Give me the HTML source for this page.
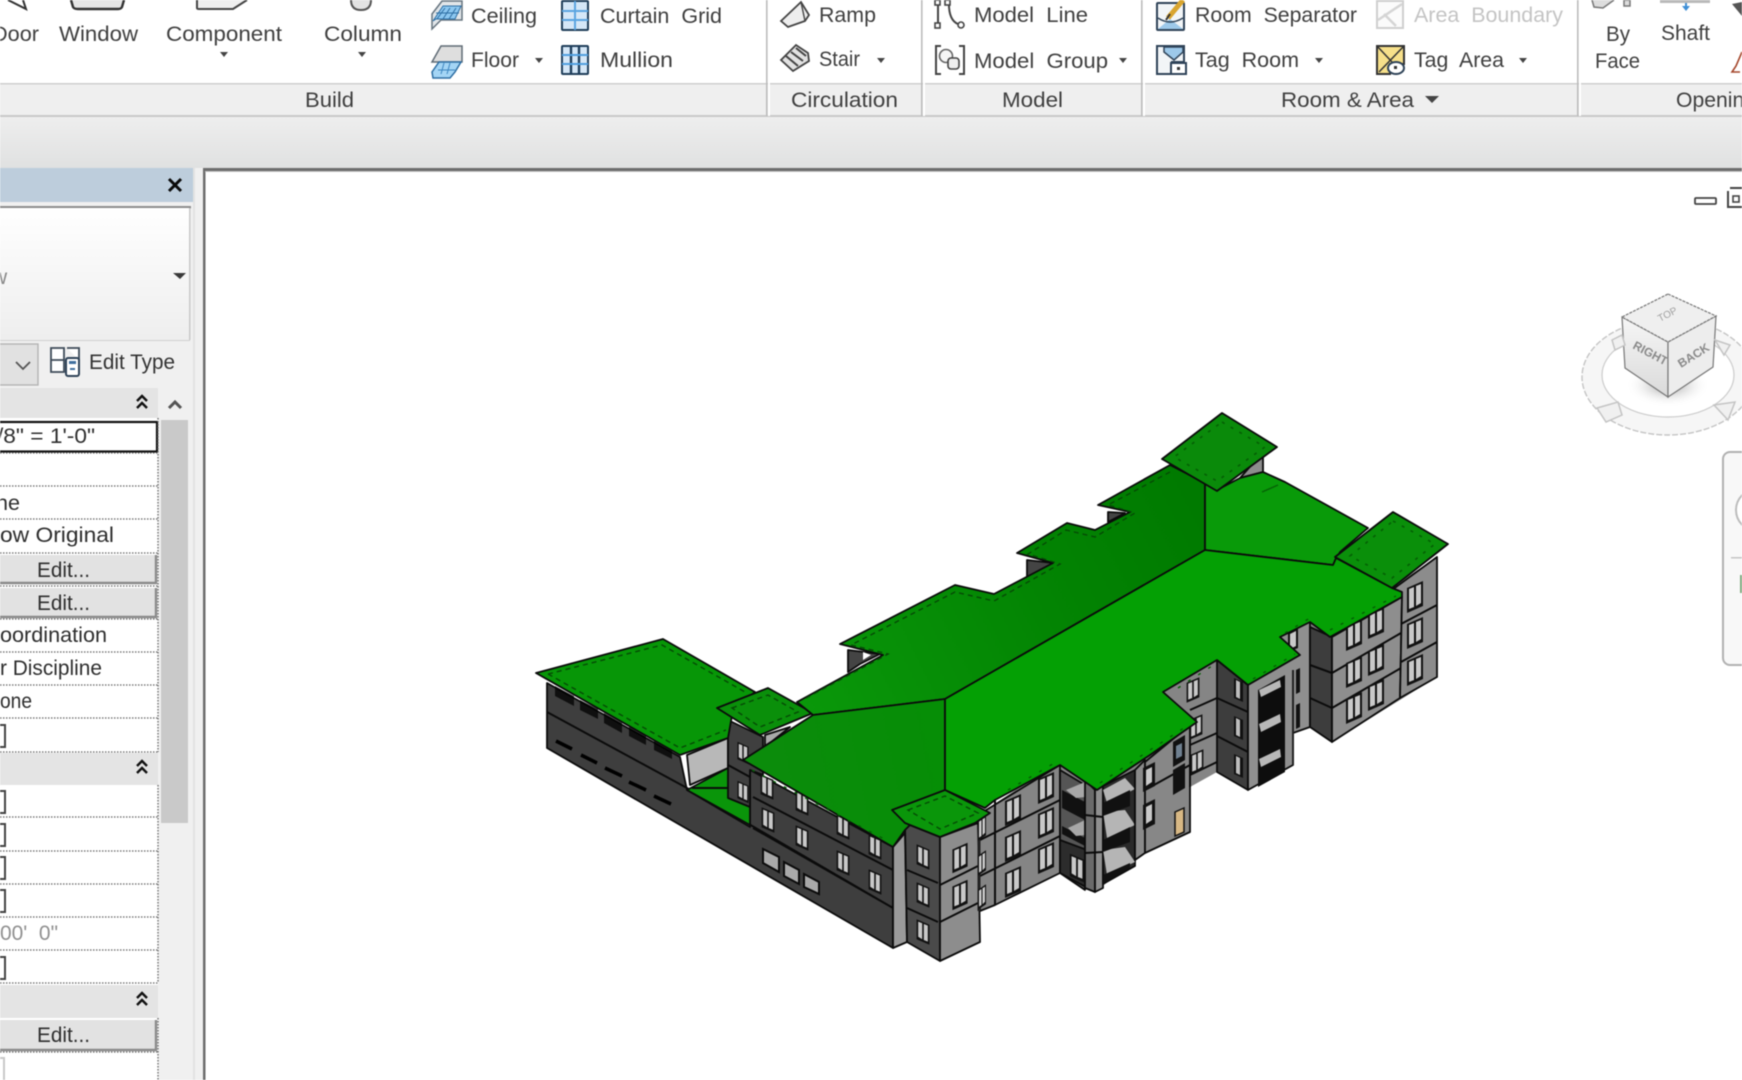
<!DOCTYPE html>
<html><head><meta charset="utf-8"><title>Revit</title>
<style>
html,body{margin:0;padding:0;background:#fff;width:1742px;height:1080px;overflow:hidden}
svg{display:block;position:absolute;left:0;top:0;filter:blur(.45px)}
text{font-family:"Liberation Sans",sans-serif;fill:#3f3f3f}
.r{font-size:21px}
.p{font-size:21px;fill:#2e2e2e}
.i{stroke:#2f4358;stroke-width:2;fill:none}
.dash{fill:none;stroke:#064a06;stroke-width:1.4;stroke-dasharray:5 4}
.l{stroke:#0b0b0b;stroke-width:2;fill:none}
.f{stroke:#0b0b0b;stroke-width:1.8;stroke-linejoin:round}
</style></head><body>
<svg width="1742" height="1080" viewBox="0 0 1742 1080" xmlns="http://www.w3.org/2000/svg">
<defs>
<linearGradient id="band" x1="0" y1="0" x2="0" y2="1"><stop offset="0" stop-color="#eeeeee"/><stop offset="1" stop-color="#e0e1e1"/></linearGradient>
<linearGradient id="sel" x1="0" y1="0" x2="0" y2="1"><stop offset="0" stop-color="#ffffff"/><stop offset="1" stop-color="#eeeeee"/></linearGradient>
<linearGradient id="back" x1="800" y1="700" x2="1200" y2="500" gradientUnits="userSpaceOnUse"><stop offset="0" stop-color="#0a980a"/><stop offset=".6" stop-color="#038403"/><stop offset="1" stop-color="#007a00"/></linearGradient>
<linearGradient id="hipL" x1="745" y1="760" x2="945" y2="720" gradientUnits="userSpaceOnUse"><stop offset="0" stop-color="#0c8c0c"/><stop offset="1" stop-color="#068e06"/></linearGradient>
<linearGradient id="cube" x1="0" y1="0" x2="0" y2="1"><stop offset="0" stop-color="#f6f6f6"/><stop offset="1" stop-color="#dadada"/></linearGradient>
<radialGradient id="shad" cx=".5" cy=".5" r=".5"><stop offset="0" stop-color="#9a9a9a"/><stop offset="1" stop-color="#ffffff" stop-opacity="0"/></radialGradient>
<g id="wR"><polygon points="-8,-9 8,-16 8,9 -8,16" fill="#111"/><polygon points="-6,-8 -1,-10 -1,10 -6,12" fill="#c9c9c9"/><polygon points="1,-11 6,-13 6,6 1,9" fill="#c9c9c9"/></g>
<g id="wL"><polygon points="8,-9 -8,-16 -8,9 8,16" fill="#111"/><polygon points="6,-8 1,-10 1,10 6,12" fill="#c9c9c9"/><polygon points="-1,-11 -6,-13 -6,6 -1,9" fill="#c9c9c9"/></g>
<g id="chev"><path d="M-5,-2 0,-7 5,-2M-5,5 0,0 5,5" fill="none" stroke="#111" stroke-width="2.4"/></g>
<g id="tri"><polygon points="-4,-2 4,-2 0,3" fill="#444"/></g>
<g id="cb"><path d="M-9,-11H4V11H-9" fill="#fff" stroke="#444" stroke-width="2"/></g>
</defs>

<!-- window chrome -->
<rect width="1742" height="1080" fill="#f1f1f1"/>
<rect y="0" width="1742" height="83" fill="#fff"/>
<rect y="83" width="1742" height="33" fill="#efefef"/>
<rect y="83" width="1742" height="1.5" fill="#cfcfcf"/>
<rect y="115" width="1742" height="2" fill="#c9c9c9"/>
<rect y="117" width="1742" height="51" fill="url(#band)"/>
<g fill="#bcbcbc"><rect x="766" y="0" width="1.6" height="116"/><rect x="921" y="0" width="1.6" height="116"/><rect x="1141" y="0" width="1.6" height="116"/><rect x="1577" y="0" width="1.6" height="116"/></g>
<g fill="#fff"><rect x="768" y="83" width="2" height="33"/><rect x="923" y="83" width="2" height="33"/><rect x="1143" y="83" width="2" height="33"/><rect x="1579" y="83" width="2" height="33"/></g>

<!-- ribbon big icon stubs -->
<path d="M8,0 26,9 23,0" fill="#fff" stroke="#333" stroke-width="2"/>
<path d="M71,0 73,7 Q74,9 78,9H118Q121,9 122,7L124,0" fill="#e6e6e6" stroke="#333" stroke-width="2.4"/>
<path d="M197,0V8Q197,9 199,9H233L247,0" fill="#efefef" stroke="#444" stroke-width="2"/>
<path d="M351,0Q351,10 361,10 371,10 371,0" fill="#e3e3e3" stroke="#555" stroke-width="2"/>

<!-- ribbon small icons -->
<g>
<path d="M432,29V14L442,1H462V20H441Z" fill="#e2e6e9" stroke="#66747f" stroke-width="1.5"/>
<path d="M433,21 443,6H461L455,19H436Z" fill="#8cc7f0" stroke="#2d6ea3" stroke-width="1"/>
<path d="M437,19 445,8M443,19 450,8M449,19 456,8M436,13H459" stroke="#2d6ea3" stroke-width="1" fill="none"/>
<path d="M432,62 441,46H462V62H440Z" fill="#dedede" stroke="#5f6b75" stroke-width="1.5"/>
<path d="M432,72 439,62H461L455,72 450,78H433Z" fill="#a4d5f5" stroke="#2d6ea3" stroke-width="1.5"/>
<path d="M438,70H455M444,63 441,74M450,63 447,74" stroke="#3d86c0" stroke-width="1" fill="none"/>
<rect x="562" y="1" width="26" height="29" rx="1" fill="#d5e7f7" stroke="#1f3e5a" stroke-width="2"/>
<path d="M575,1V30M562,11H588M562,20H588" stroke="#5ba5e0" stroke-width="2"/>
<rect x="562" y="46" width="26" height="28" rx="1" fill="#d5e7f7" stroke="#1f3e5a" stroke-width="2"/>
<path d="M571,46V74M579,46V74" stroke="#1f3e5a" stroke-width="2.4"/>
<path d="M562,55H571M562,64H571M579,55H588M579,64H588M571,55H579M571,64H579" stroke="#4f9fdf" stroke-width="2"/>
<path d="M781,21 801,2 809,15 805,21 788,27Z" fill="#eee" stroke="#444" stroke-width="1.8"/>
<path d="M801,2 805,21" stroke="#444" stroke-width="1.4"/>
<path d="M781,60 796,45 808,53 809,61 793,71Z" fill="#e2e2e2" stroke="#444" stroke-width="1.8"/>
<path d="M786,56 798,66M791,52 803,61M796,48 806,56" stroke="#444" stroke-width="2" fill="none"/>
<path d="M938,0V26M949,0Q948,20 958,24" fill="none" style="stroke:#444;stroke-width:2"/>
<rect x="935" y="0" width="5" height="5" fill="#fff" stroke="#444" stroke-width="1.6"/><rect x="945" y="0" width="5" height="5" fill="#fff" stroke="#444" stroke-width="1.6"/><rect x="935" y="23" width="5" height="5" fill="#fff" stroke="#444" stroke-width="1.6"/><circle cx="961" cy="25" r="3" fill="#fff" stroke="#444" stroke-width="1.6"/>
<path d="M941,46H936V74H941M959,46H964V74H959" fill="none" stroke="#444" stroke-width="2"/>
<circle cx="946" cy="56" r="6.5" fill="#f6f6f6" stroke="#666" stroke-width="1.6"/><rect x="948" y="58" width="11" height="11" rx="3" fill="#eee" stroke="#444" stroke-width="1.6"/>
<rect x="1157" y="3" width="27" height="27" rx="1" fill="#f2f5f7" stroke="#2f4358" stroke-width="2"/>
<path d="M1158,29 1170,19 1183,29Z" fill="#9dc9ea"/><path d="M1158,18Q1170,26 1183,18" stroke="#2f4358" stroke-width="1.5" fill="none"/>
<path d="M1168,18 1183,0" stroke="#d9a52f" stroke-width="5"/><path d="M1166,20 1170,14" stroke="#333" stroke-width="2"/>
<path d="M1157,74V46H1184V62H1172V74Z" fill="#f2f5f7" stroke="#2f4358" stroke-width="2"/>
<path d="M1164,47H1183V52L1174,60 1164,52Z" fill="#9dc9ea" stroke="#2f4358" stroke-width="1.5"/>
<rect x="1171" y="63" width="15" height="11" fill="#fff" stroke="#2f4358" stroke-width="2"/><rect x="1177" y="67" width="3" height="3" fill="#333"/>
<rect x="1377" y="1" width="26" height="27" fill="#fbfbfb" stroke="#cfcfcf" stroke-width="2"/><path d="M1378,20 1402,4M1384,14 1396,26" stroke="#d5d5d5" stroke-width="2.5"/>
<path d="M1377,46H1404V64H1390V74H1377Z" fill="#f7e08a" stroke="#333" stroke-width="2"/><path d="M1377,46 1392,62M1404,46 1379,72" stroke="#333" stroke-width="1.5" fill="none"/>
<ellipse cx="1396" cy="68" rx="8" ry="6" fill="#fff" stroke="#2f4358" stroke-width="2"/><rect x="1394" y="66" width="3" height="3" fill="#333"/>
<path d="M1592,0 1594,7 1603,8 1614,0M1624,0H1630V6H1624Z" fill="#ddd" stroke="#777" stroke-width="1.5"/>
<rect x="1660" y="0" width="50" height="3" fill="#b9b9b9"/><path d="M1686,3V10" stroke="#3f8fd6" stroke-width="2"/><path d="M1682,6 1686,11 1690,6Z" fill="#3f8fd6"/>
<path d="M1732,4 1742,16V2Z" fill="#555"/><path d="M1742,52 1736,66 1732,72H1740" fill="none" stroke="#a5472c" stroke-width="1.6"/>
</g>

<!-- ribbon text -->
<g class="r">
<text x="-8" y="41" textLength="47" lengthAdjust="spacingAndGlyphs">Door</text>
<text x="59" y="41" textLength="79" lengthAdjust="spacingAndGlyphs">Window</text>
<text x="166" y="41" textLength="116" lengthAdjust="spacingAndGlyphs">Component</text>
<text x="324" y="41" textLength="78" lengthAdjust="spacingAndGlyphs">Column</text>
<text x="471" y="23" textLength="66" lengthAdjust="spacingAndGlyphs">Ceiling</text>
<text x="471" y="67" textLength="48" lengthAdjust="spacingAndGlyphs">Floor</text>
<text x="600" y="23" textLength="122" lengthAdjust="spacingAndGlyphs" xml:space="preserve">Curtain  Grid</text>
<text x="600" y="67" textLength="73" lengthAdjust="spacingAndGlyphs">Mullion</text>
<text x="819" y="22" textLength="57" lengthAdjust="spacingAndGlyphs">Ramp</text>
<text x="819" y="66" textLength="41" lengthAdjust="spacingAndGlyphs">Stair</text>
<text x="974" y="22" textLength="114" lengthAdjust="spacingAndGlyphs" xml:space="preserve">Model  Line</text>
<text x="974" y="68" textLength="134" lengthAdjust="spacingAndGlyphs" xml:space="preserve">Model  Group</text>
<text x="1195" y="22" textLength="162" lengthAdjust="spacingAndGlyphs" xml:space="preserve">Room  Separator</text>
<text x="1414" y="22" textLength="149" lengthAdjust="spacingAndGlyphs" style="fill:#c4c4c4" xml:space="preserve">Area  Boundary</text>
<text x="1195" y="67" textLength="104" lengthAdjust="spacingAndGlyphs" xml:space="preserve">Tag  Room</text>
<text x="1414" y="67" textLength="90" lengthAdjust="spacingAndGlyphs" xml:space="preserve">Tag  Area</text>
<text x="1606" y="41" textLength="24" lengthAdjust="spacingAndGlyphs">By</text>
<text x="1595" y="68" textLength="45" lengthAdjust="spacingAndGlyphs">Face</text>
<text x="1661" y="40" textLength="49" lengthAdjust="spacingAndGlyphs">Shaft</text>
<text x="305" y="107" textLength="49" lengthAdjust="spacingAndGlyphs">Build</text>
<text x="791" y="107" textLength="107" lengthAdjust="spacingAndGlyphs">Circulation</text>
<text x="1002" y="107" textLength="61" lengthAdjust="spacingAndGlyphs">Model</text>
<text x="1281" y="107" textLength="133" lengthAdjust="spacingAndGlyphs">Room &amp; Area</text>
<text x="1676" y="107" textLength="80" lengthAdjust="spacingAndGlyphs">Opening</text>
</g>
<use href="#tri" x="224" y="54"/><use href="#tri" x="362" y="54"/><use href="#tri" x="539" y="60"/><use href="#tri" x="881" y="60"/><use href="#tri" x="1123" y="60"/><use href="#tri" x="1319" y="60"/><use href="#tri" x="1523" y="60"/>
<polygon points="1425,96 1439,96 1432,103" fill="#444"/>

<!-- properties panel -->
<rect x="0" y="168" width="203" height="912" fill="#f0f0f0"/>
<rect x="0" y="168" width="193" height="34" fill="#bdcddc"/>
<rect x="193" y="168" width="2" height="912" fill="#e2e2e2"/>
<path d="M169,179 181,191M181,179 169,191" stroke="#0a0a0a" stroke-width="3"/>
<rect x="0" y="206" width="191" height="2.5" fill="#8d8d8d"/>
<rect x="0" y="208" width="190" height="132" fill="url(#sel)"/>
<rect x="189" y="208" width="1.5" height="132" fill="#c9c9c9"/><rect x="0" y="340" width="190" height="1" fill="#d0d0d0"/>
<text x="-8" y="284" class="p" style="fill:#888">w</text>
<polygon points="173,273 186,273 180,279" fill="#3a3a3a"/>
<rect x="-2" y="344" width="40" height="41" fill="#e1e1e1" stroke="#b4b4b4" stroke-width="1.4"/>
<path d="M16,362 23,369 30,362" stroke="#555" stroke-width="1.8" fill="none"/>
<path d="M51,372V348H64V372ZM67,348H79V360M51,360H64" fill="#fff" stroke="#3d4a58" stroke-width="1.8"/>
<rect x="66" y="358" width="13" height="18" rx="2" fill="#fff" stroke="#2f4358" stroke-width="2"/><rect x="69" y="361" width="7" height="3" fill="#3f6f9f"/><path d="M70,369H75" stroke="#3f6f9f" stroke-width="2"/>
<text x="89" y="369" class="p" textLength="86" lengthAdjust="spacingAndGlyphs" style="fill:#333">Edit Type</text>

<rect x="0" y="388" width="158" height="30" fill="#e4e4e4"/>
<rect x="0" y="418" width="158" height="662" fill="#fff"/>
<rect x="0" y="753" width="158" height="32" fill="#e4e4e4"/>
<rect x="0" y="985" width="158" height="33" fill="#e4e4e4"/>
<use href="#chev" x="142" y="403"/><use href="#chev" x="142" y="768"/><use href="#chev" x="142" y="1000"/>
<rect x="161" y="388" width="27" height="692" fill="#f0f0f0"/>
<rect x="161" y="420" width="27" height="403" fill="#c9c9c9"/>
<path d="M169,408 175,402 181,408" stroke="#555" stroke-width="3" fill="none"/>
<rect x="-3" y="422" width="160" height="29.5" fill="#fff" stroke="#111" stroke-width="2.2"/>
<text x="-3" y="443" class="p" textLength="98" lengthAdjust="spacingAndGlyphs">/8" = 1'-0"</text>
<g stroke="#666" stroke-width="1.3" stroke-dasharray="1.5 1.5">
<path d="M0,453H158M0,486H158M0,519H158M0,553H158M0,586H158M0,619H158M0,652H158M0,685H158M0,718H158M0,752H158M0,817H158M0,851H158M0,884H158M0,917H158M0,950H158M0,983H158M0,1052H158"/>
<path d="M158,418V752M158,785V983M158,1018V1080"/>
</g>
<text x="-4" y="510" class="p" textLength="24" lengthAdjust="spacingAndGlyphs">ne</text>
<text x="0" y="542" class="p" textLength="114" lengthAdjust="spacingAndGlyphs">ow Original</text>
<g>
<rect x="-2" y="555" width="158" height="28" fill="#e2e2e2"/><path d="M156,555V583H-2" stroke="#8a8a8a" stroke-width="2.4" fill="none"/>
<rect x="-2" y="588" width="158" height="29" fill="#e2e2e2"/><path d="M156,588V617H-2" stroke="#8a8a8a" stroke-width="2.4" fill="none"/>
<rect x="-2" y="1020" width="158" height="30" fill="#e2e2e2"/><path d="M156,1020V1050H-2" stroke="#8a8a8a" stroke-width="2.4" fill="none"/>
</g>
<text x="37" y="577" class="p" textLength="53" lengthAdjust="spacingAndGlyphs">Edit...</text>
<text x="37" y="610" class="p" textLength="53" lengthAdjust="spacingAndGlyphs">Edit...</text>
<text x="37" y="1042" class="p" textLength="53" lengthAdjust="spacingAndGlyphs">Edit...</text>
<text x="0" y="642" class="p" textLength="107" lengthAdjust="spacingAndGlyphs">oordination</text>
<text x="0" y="675" class="p" textLength="102" lengthAdjust="spacingAndGlyphs">r Discipline</text>
<text x="0" y="708" class="p" textLength="32" lengthAdjust="spacingAndGlyphs">one</text>
<text x="0" y="940" class="p" textLength="58" lengthAdjust="spacingAndGlyphs" style="fill:#909090" xml:space="preserve">00'  0"</text>
<use href="#cb" x="1" y="736"/><use href="#cb" x="1" y="802"/><use href="#cb" x="1" y="835"/><use href="#cb" x="1" y="868"/><use href="#cb" x="1" y="901"/><use href="#cb" x="1" y="968"/>
<path d="M-5,1058H4V1080" fill="none" stroke="#c9c9c9" stroke-width="2"/>

<!-- viewport -->
<rect x="203" y="169" width="1539" height="911" fill="#fff"/>
<rect x="203" y="168" width="1539" height="3" fill="#6d6d6d"/>
<rect x="203" y="168" width="2.5" height="912" fill="#6d6d6d"/>
<rect x="205" y="171" width="1537" height="1" fill="#c5c5c5"/>

<!-- view controls -->
<rect x="1695" y="198" width="21" height="6" rx="1" fill="#fff" stroke="#444" stroke-width="1.8"/>
<path d="M1730,188H1742M1728,191V207H1742" fill="none" stroke="#444" stroke-width="2"/><rect x="1733" y="196" width="6" height="6" fill="none" stroke="#444" stroke-width="1.6"/>
<!-- view cube -->
<g>
<ellipse cx="1668" cy="377" rx="86" ry="58" fill="#f6f6f6" stroke="#c4c4c4" stroke-width="1.4" stroke-dasharray="6 2"/>
<ellipse cx="1668" cy="375" rx="66" ry="42" fill="#fff" stroke="#cccccc" stroke-width="1.2"/>
<ellipse cx="1668" cy="385" rx="42" ry="22" fill="url(#shad)"/>
<polygon points="1622,317 1668,342 1668,397 1625,368" fill="url(#cube)" stroke="#777" stroke-width="1.2"/>
<polygon points="1668,342 1716,316 1713,367 1668,397" fill="#ededed" stroke="#777" stroke-width="1.2"/>
<polygon points="1668,294 1716,316 1668,342 1622,317" fill="#efefef" stroke="#777" stroke-width="1.2" stroke-dasharray="3 1"/>
<text transform="translate(1632,348) rotate(28)" style="font-size:12px;fill:#8a8a8a;font-weight:bold">RIGHT</text>
<text transform="translate(1681,368) rotate(-32)" style="font-size:12px;fill:#8a8a8a;font-weight:bold">BACK</text>
<text transform="translate(1660,322) rotate(-28)" style="font-size:10px;fill:#a0a0a0">TOP</text>
<path d="M1612,340 1622,335 1625,345 1615,350ZM1597,408 1618,402 1622,415 1606,422ZM1715,340 1730,345 1724,355ZM1714,405 1735,402 1728,420Z" fill="#f0f0f0" stroke="#c4c4c4" stroke-width="1.5"/>
</g>
<!-- nav bar -->
<rect x="1723" y="452" width="40" height="213" rx="7" fill="#f8f8f8" stroke="#b1b1b1" stroke-width="2"/>
<circle cx="1757" cy="510" r="21" fill="#fff" stroke="#bcbcbc" stroke-width="2"/>
<rect x="1731" y="557" width="12" height="1.5" fill="#c5c5c5"/>
<rect x="1740" y="575" width="2" height="18" fill="#7fa97f"/>

<!-- BUILDING -->
<g>
<polygon class="f" fill="#3e3e3e" points="547,683 680,757 687,790 750,827 750,770 893,847 893,948 547,748"/>
<path class="l" d="M547,712 687,788M753,797 893,870M753,828 893,908M687,788 893,908"/>
<g stroke="#000" stroke-width="3.5">
<path d="M556,741 572,749M581,755 597,763M605,768 622,776M629,782 646,790M654,796 671,804"/>
</g>
<g fill="#000" opacity=".75"><polygon points="555,686 574,696 574,706 555,696"/><polygon points="580,700 598,709 598,719 580,710"/><polygon points="604,713 622,723 622,733 604,723"/><polygon points="629,726 646,735 646,745 629,736"/><polygon points="654,740 672,749 672,759 654,750"/></g>
<g fill="#a9a9a9" stroke="#0b0b0b" stroke-width="2"><polygon points="763,849 779,857 779,872 763,863"/><polygon points="784,862 799,870 799,884 784,876"/><polygon points="804,874 819,882 819,894 804,887"/></g>
<polygon class="f" fill="#b8b8b8" points="687,755 728,738 728,768 690,785"/>
<polygon class="f" fill="#0a950a" points="687,790 728,768 750,780 750,825"/>
<path class="l" d="M692,788H728"/>
<polygon class="f" fill="#3f3f3f" points="728,720 763,737 763,775 750,770 750,807 728,798"/>
<polygon fill="#aaa" class="f" points="765,735 790,727 765,747"/>
<path class="l" d="M728,765 750,777"/>
<use href="#wL" transform="translate(743,753) scale(.7)"/><use href="#wL" transform="translate(743,792) scale(.7)"/>
<polygon class="f" fill="#079607" points="536,673 663,639 755,692 733,710 728,738 680,755"/>
<path class="dash" d="M548,674 662,645 745,692M548,674 680,748 726,730"/>
<polygon class="f" fill="#0a8f0a" points="717,708 768,688 813,713 760,735"/>
<path class="dash" d="M732,708 768,695 798,712 760,727Z"/>

<g>
<use href="#wL" transform="translate(767,787) scale(.8)"/><use href="#wL" transform="translate(802,803) scale(.8)"/><use href="#wL" transform="translate(843,827) scale(.8)"/><use href="#wL" transform="translate(875,847) scale(.8)"/>
<use href="#wL" transform="translate(768,820) scale(.8)"/><use href="#wL" transform="translate(802,838) scale(.8)"/><use href="#wL" transform="translate(843,863) scale(.8)"/><use href="#wL" transform="translate(875,882) scale(.8)"/>
</g>

<polygon class="f" fill="#9a9a9a" points="893,847 905,833 907,942 893,948"/>
<polygon class="f" fill="#4a4a4a" points="905,823 940,837 940,961 907,942"/>
<polygon class="f" fill="#8d8d8d" points="940,837 978,823 980,942 940,961"/>
<path class="l" d="M907,870 938,883M907,908 938,922M940,885 978,866M940,922 978,903"/>
<use href="#wL" transform="translate(923,857) scale(.8)"/><use href="#wL" transform="translate(923,895) scale(.8)"/><use href="#wL" transform="translate(923,932) scale(.8)"/>
<use href="#wR" transform="translate(960,858) scale(.95)"/><use href="#wR" transform="translate(960,895) scale(.95)"/>

<!-- backing under eave notches -->
<polygon fill="#858585" points="978,815 1060,760 1095,785 1163,690 1217,655 1248,685 1280,630 1310,620 1333,635 1395,585 1437,557 1437,677 1332,742 1310,727 1293,733 1293,765 1248,790 1217,772 1190,787 1190,832 1145,853 1095,892 1060,873 980,911"/>

<polygon class="f" fill="#858585" points="978,815 1060,765 1060,873 995,905 980,911"/>
<path class="l" d="M978,841 1060,800M978,877 1060,836M995,800V905"/>
<path d="M979,825V911" stroke="#222" stroke-width="3"/>
<g>
<use href="#wR" transform="translate(982,828) scale(.5,.8)"/><use href="#wR" transform="translate(982,863) scale(.5,.8)"/><use href="#wR" transform="translate(982,897) scale(.5,.8)"/>
<use href="#wR" x="1013" y="810"/><use href="#wR" x="1013" y="846"/><use href="#wR" x="1013" y="882"/>
<use href="#wR" x="1046" y="788"/><use href="#wR" x="1046" y="823"/><use href="#wR" x="1046" y="858"/>
</g>
<polygon class="f" fill="#555" points="1060,770 1085,785 1085,890 1060,873"/>
<polygon fill="#2c2c2c" class="f" points="1060,840 1095,853 1095,892 1060,873"/>
<use href="#wL" transform="translate(1077,868) scale(.9)"/>
<polygon fill="#111" points="1062,790 1085,802 1085,820 1062,808"/>
<polygon fill="#a7a7a7" points="1066,790 1085,782 1085,797 1076,798"/>
<polygon fill="#111" points="1062,826 1085,838 1085,846 1062,834"/>
<polygon fill="#a7a7a7" points="1068,828 1085,820 1085,835 1076,836"/>
<polygon class="f" fill="#6a6a6a" points="1085,780 1095,790 1095,892 1085,888"/>
<polygon class="f" fill="#8f8f8f" points="1095,790 1103,785 1103,888 1095,892"/>
<path class="l" d="M1085,815 1103,817M1085,853 1103,852"/>
<polygon class="f" fill="#2a2a2a" points="1103,786 1135,770 1135,866 1103,884"/>
<g fill="#b5b5b5"><polygon points="1103,790 1125,778 1135,789 1107,803"/><polygon points="1103,812 1125,810 1135,825 1107,838"/><polygon points="1103,850 1125,847 1135,862 1107,875"/></g>
<g fill="#111"><polygon points="1103,803 1130,790 1130,806 1103,816"/><polygon points="1103,840 1130,827 1130,842 1103,852"/><polygon points="1103,875 1130,863 1130,868 1103,884"/></g>
<polygon class="f" fill="#8a8a8a" points="1135,770 1145,760 1145,853 1135,860"/>
<polygon class="f" fill="#878787" points="1145,762 1190,725 1190,832 1145,853"/>
<path class="l" d="M1145,790 1190,765"/>
<polygon fill="#111" points="1173,742 1185,735 1185,760 1173,767"/><polygon fill="#111" points="1173,770 1185,763 1185,788 1173,795"/>
<polygon fill="#6f8090" points="1176,746 1182,743 1182,756 1176,759"/>
<polygon fill="#111" points="1143,768 1155,762 1155,786 1143,792"/><polygon fill="#c9c9c9" points="1146,770 1152,767 1152,782 1146,786"/>
<polygon fill="#111" points="1143,805 1155,799 1155,824 1143,830"/><polygon fill="#c9c9c9" points="1146,807 1152,804 1152,820 1146,824"/>
<polygon fill="#d8b884" stroke="#111" stroke-width="1.5" points="1175,812 1184,808 1184,832 1175,836"/>
<path class="l" d="M1190,710 1217,698M1190,745 1217,733M1190,775 1217,762M1190,725V787"/>
<use href="#wR" transform="translate(1193,690) scale(.8)"/><use href="#wR" transform="translate(1196,727) scale(.8)"/><use href="#wR" transform="translate(1197,762) scale(.8)"/>
<polygon class="f" fill="#3d3d3d" points="1217,660 1248,685 1248,790 1217,772"/>
<path class="l" d="M1217,698 1248,712M1217,736 1248,752"/>
<polygon fill="#111" points="1234,678 1243,682 1243,702 1234,698"/><polygon fill="#bdbdbd" points="1236,680 1240,682 1240,699 1236,697"/>
<polygon fill="#111" points="1234,716 1243,720 1243,740 1234,736"/><polygon fill="#bdbdbd" points="1236,718 1240,720 1240,737 1236,735"/>
<polygon fill="#111" points="1234,754 1243,758 1243,778 1234,774"/><polygon fill="#bdbdbd" points="1236,756 1240,758 1240,775 1236,773"/>
<polygon class="f" fill="#8f8f8f" points="1248,685 1280,630 1310,620 1310,727 1293,733 1293,765 1248,790"/>
<polygon fill="#111" points="1288,632 1298,628 1298,648 1288,652"/><polygon fill="#c9c9c9" points="1290,634 1296,631 1296,646 1290,649"/>
<polygon fill="#0d0d0d" points="1258,690 1285,675 1285,772 1258,787"/>
<g fill="#b8b8b8"><polygon points="1259,690 1280,680 1281,687 1261,697"/><polygon points="1259,724 1280,714 1281,722 1261,732"/><polygon points="1259,759 1280,749 1281,757 1261,767"/></g>
<path d="M1293,670V765" stroke="#222" stroke-width="2"/>
<polygon fill="#111" points="1296,670 1300,668 1300,692 1296,694"/><polygon fill="#111" points="1296,705 1300,703 1300,727 1296,729"/>
<polygon class="f" fill="#3d3d3d" points="1310,627 1332,637 1332,742 1310,727"/>
<path class="l" d="M1310,665 1332,673M1310,698 1332,708"/>
<polygon class="f" fill="#8e8e8e" points="1332,637 1402,597 1400,698 1332,742"/>
<path class="l" d="M1332,673 1401,633M1332,708 1401,668"/>
<use href="#wR" x="1354" y="635"/><use href="#wR" x="1376" y="623"/><use href="#wR" x="1354" y="672"/><use href="#wR" x="1376" y="660"/><use href="#wR" x="1354" y="708"/><use href="#wR" x="1376" y="695"/>
<polygon class="f" fill="#8c8c8c" points="1392,590 1437,557 1437,677 1400,698 1402,597"/>
<path class="l" d="M1401,624 1437,605M1401,662 1437,642"/>
<use href="#wR" x="1415" y="597"/><use href="#wR" x="1415" y="633"/><use href="#wR" x="1415" y="670"/>

<polygon class="f" fill="#444" points="848,650 880,654 860,664 848,672"/>
<polygon class="f" fill="#444" points="1027,560 1053,563 1027,578"/>
<polygon class="f" fill="#444" points="1108,512 1125,513 1108,522"/>
<polygon class="f" fill="#8d8d8d" points="1263,452 1263,472 1240,478"/>
<polygon fill="#fff" points="863,652 871,655 863,660"/>

<polygon class="f" fill="url(#back)" points="797,702 883,655 840,644 955,585 994,594 1053,563 1017,553 1067,523 1095,530 1130,512 1098,505 1170,465 1205,483 1205,550 945,699 813,715"/>
<path class="dash" d="M806,698 888,654 851,645 955,592 994,601 1060,564 1028,554 1066,530 1095,537 1135,513 1108,505 1170,472"/>
<polygon class="f" fill="#099a09" points="1205,483 1217,490 1240,478 1263,472 1285,482 1368,528 1340,552 1333,565 1205,550"/>
<path d="M1262,492 1278,485" stroke="#066306" stroke-width="1.5"/>
<polygon class="f" fill="url(#hipL)" points="743,760 813,715 945,699 945,790 905,830 893,847"/>
<polygon class="f" fill="#04a004" points="945,699 1205,550 1333,565 1336,558 1392,588 1402,592 1402,597 1330,637 1310,622 1280,637 1300,655 1248,685 1217,660 1163,692 1197,722 1150,755 1097,790 1060,765 995,800 985,808 945,790"/>
<g fill="none" stroke="#055f05" stroke-width="1.4" stroke-dasharray="3 9">
<path d="M1008,790 1058,761M1100,783 1150,750 1190,724M1178,688 1215,664M1253,679 1295,654M1330,630 1396,596M1285,633 1310,618"/>
<path d="M752,770 890,842"/>
</g>
<polygon class="f" fill="#0a8a0a" points="1222,413 1277,447 1217,491 1162,459"/>
<path fill="none" stroke="#055f05" stroke-width="1.6" stroke-dasharray="3 7" d="M1222,422 1265,447 1217,481 1174,457Z"/>
<polygon class="f" fill="#0a8f0a" points="1393,512 1448,544 1392,588 1335,557"/>
<path fill="none" stroke="#055f05" stroke-width="1.6" stroke-dasharray="3 7" d="M1393,521 1435,544 1392,578 1350,556Z"/>
<polygon class="f" fill="#0a960a" points="892,810 945,790 990,813 975,823 940,837 905,823"/>
<path class="dash" d="M908,810 945,796 978,813 940,829Z"/>
</g>
</svg>
</body></html>
